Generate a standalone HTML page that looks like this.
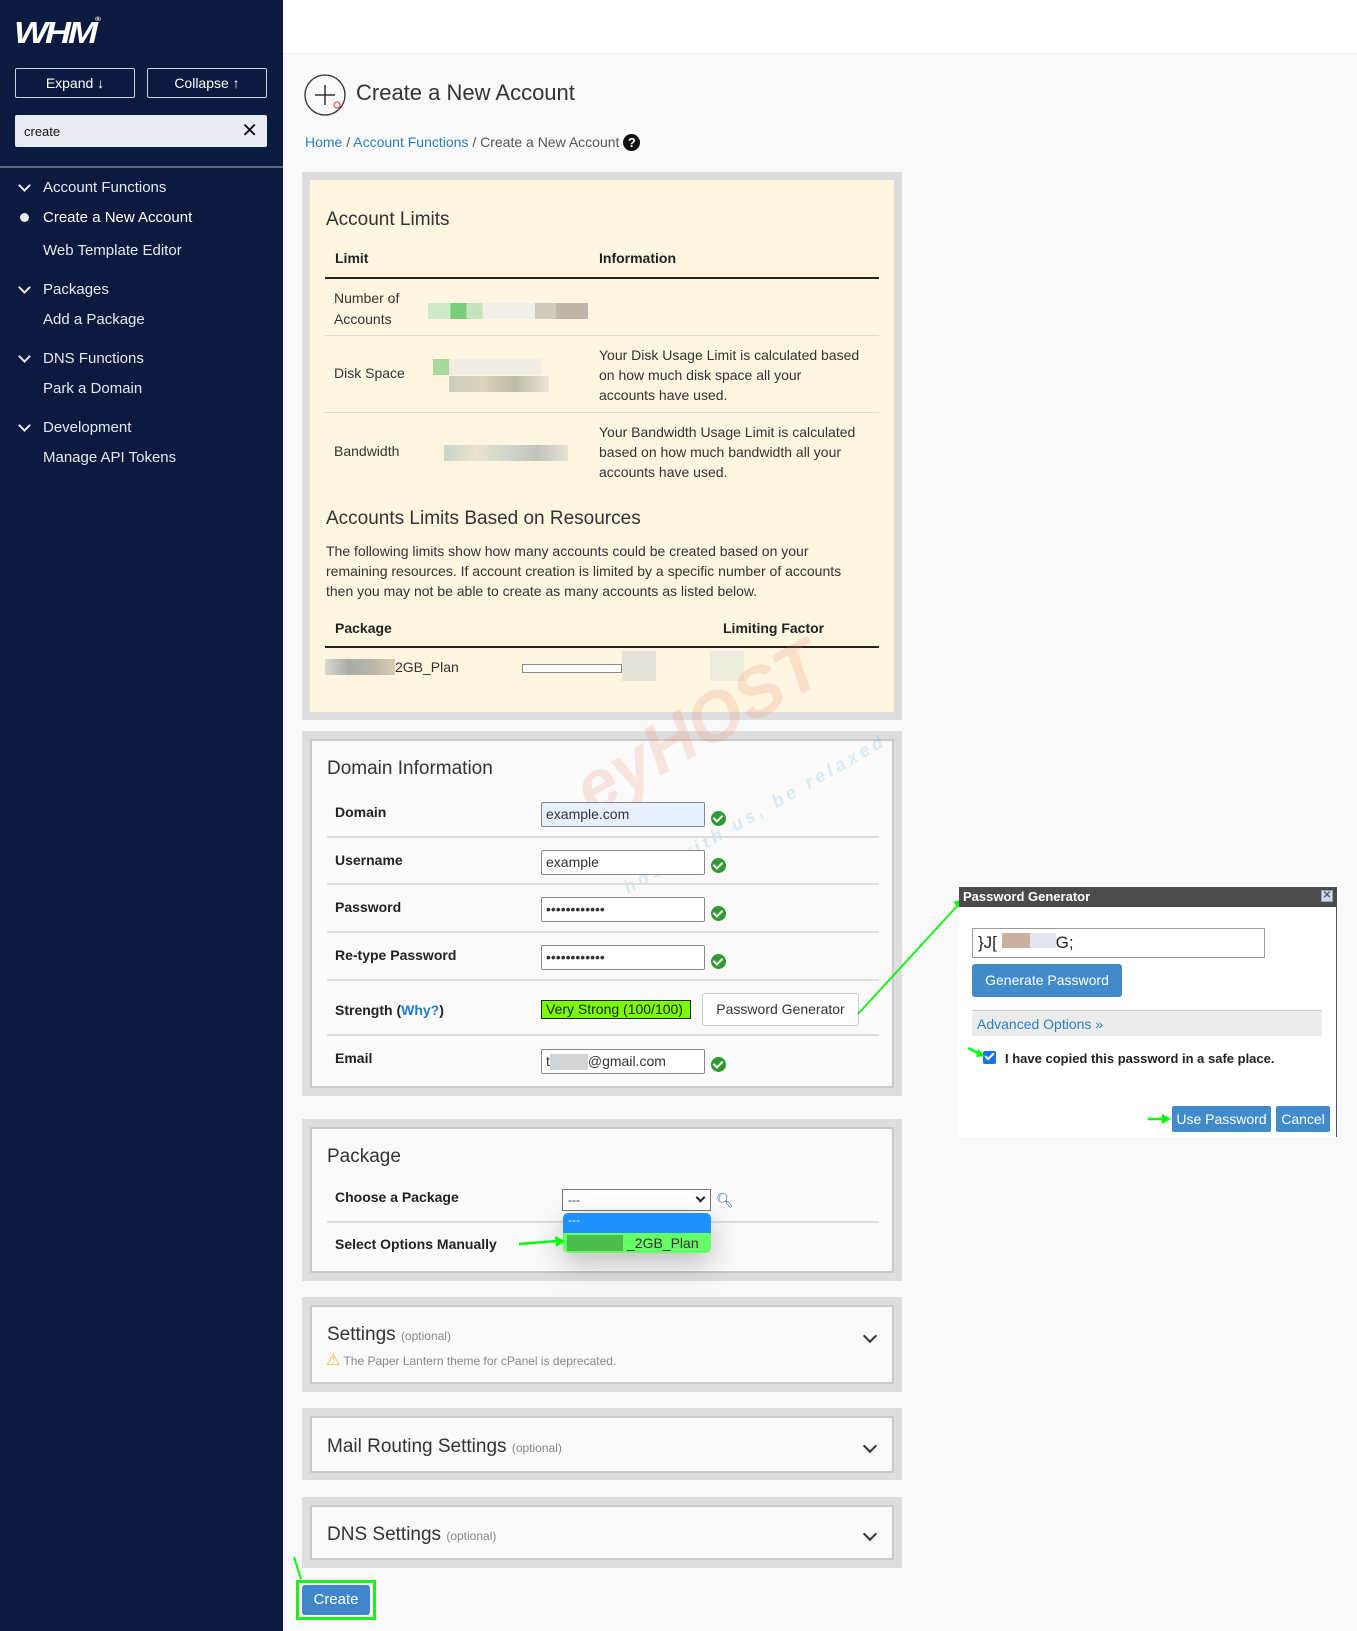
<!DOCTYPE html>
<html><head><meta charset="utf-8"><style>
*{box-sizing:border-box;margin:0;padding:0}
body{width:1357px;height:1631px;position:relative;overflow:hidden;background:#f9f9f9;font-family:"Liberation Sans",sans-serif;color:#333}
.a{position:absolute}
#side{left:0;top:0;width:283px;height:1631px;background:#0b1a3e}
.sb{border:1px solid #c8cede;color:#fff;font-size:14px;text-align:center;line-height:28px;border-radius:2px}
.nav{color:#e6e9f0;font-size:15px;left:43px}
.chev{left:20px;width:9px;height:9px;border-right:2px solid #e6e9f0;border-bottom:2px solid #e6e9f0;transform:rotate(45deg)}
.box{background:#ddd}
.inner{background:#fafafa;border:2px solid #c9c9c9}
.h{font-size:19px;color:#333}
.lbl{font-size:14px;font-weight:bold;color:#222;left:335px}
.sep{left:327px;width:552px;height:2px;background:#ddd}
.inp{left:541px;width:164px;height:25px;border:1px solid #888;background:#fff;font-size:14px;padding-left:4px;line-height:23px;border-radius:2px}
.chk{left:711px;width:15px;height:15px;border-radius:50%;background:#2e9b2e}
.chk:after{content:"";position:absolute;left:4px;top:2px;width:4px;height:7px;border-right:2px solid #fff;border-bottom:2px solid #fff;transform:rotate(45deg)}
.cv{width:10px;height:10px;border-right:2px solid #333;border-bottom:2px solid #333;transform:rotate(45deg);left:865px}
.opt{font-size:12px;color:#888}
.t{font-size:14px;color:#333}
.px{height:16px}
</style></head><body>
<div class="a" style="left:283px;top:0;width:1074px;height:54px;background:#fff;border-bottom:1px solid #eee"></div>
<div id="side" class="a">
<div class="a" style="left:14px;top:12px;color:#fff;font-size:36px;font-weight:900;font-style:italic;letter-spacing:-3px;transform:scaleY(0.85)">WHM<span style="font-size:8px;vertical-align:top;letter-spacing:0">®</span></div>
<div class="a sb" style="left:15px;top:68px;width:120px;height:30px">Expand ↓</div>
<div class="a sb" style="left:147px;top:68px;width:120px;height:30px">Collapse ↑</div>
<div class="a" style="left:15px;top:115px;width:252px;height:32px;background:#e9ecf3;border-radius:2px;font-size:13px;color:#111;padding:9px 9px">create<span style="position:absolute;right:9px;top:3px;font-size:20px">✕</span></div>
<div class="a" style="left:0;top:166px;width:283px;height:2px;background:#5a6580"></div>
<div class="a chev" style="top:181px"></div><div class="a nav" style="top:179px">Account Functions</div>
<div class="a" style="left:20px;top:213px;width:9px;height:9px;border-radius:50%;background:#e6e9f0"></div><div class="a nav" style="top:209px;color:#fff">Create a New Account</div>
<div class="a nav" style="top:242px">Web Template Editor</div>
<div class="a chev" style="top:283px"></div><div class="a nav" style="top:281px">Packages</div>
<div class="a nav" style="top:311px">Add a Package</div>
<div class="a chev" style="top:352px"></div><div class="a nav" style="top:350px">DNS Functions</div>
<div class="a nav" style="top:380px">Park a Domain</div>
<div class="a chev" style="top:421px"></div><div class="a nav" style="top:419px">Development</div>
<div class="a nav" style="top:449px">Manage API Tokens</div>
</div>

<svg class="a" style="left:304px;top:74px" width="44" height="44"><circle cx="21" cy="21" r="20" fill="none" stroke="#333" stroke-width="1.3"/><path d="M21 11v20M11 21h20" stroke="#333" stroke-width="1.5"/><circle cx="33" cy="31" r="3" fill="#fff" stroke="#e55" stroke-width="1.3"/></svg>
<div class="a" style="left:356px;top:80px;font-size:22px;color:#333">Create a New Account</div>
<div class="a" style="left:305px;top:134px;font-size:14px;color:#555"><span style="color:#2a7fc0">Home</span> / <span style="color:#2a7fc0">Account Functions</span> / Create a New Account <span style="display:inline-block;width:17px;height:17px;border-radius:50%;background:#111;color:#fff;text-align:center;font-weight:bold;font-size:13px;line-height:17px">?</span></div>

<!-- Account limits -->
<div class="a box" style="left:302px;top:172px;width:600px;height:548px"></div>
<div class="a" style="left:310px;top:180px;width:584px;height:532px;background:#fcf6e1"></div>
<div class="a h" style="left:326px;top:209px">Account Limits</div>
<div class="a lbl" style="top:250px">Limit</div><div class="a lbl" style="top:250px;left:599px">Information</div>
<div class="a" style="left:325px;top:277px;width:554px;height:2px;background:#222"></div>
<div class="a t" style="left:334px;top:288px;line-height:21px">Number of<br>Accounts</div>
<div class="a px" style="left:428px;top:303px;width:160px;background:linear-gradient(90deg,#cce8c5 0 14%,#77cf77 14% 24%,#c4e4c0 24% 34%,#f1efe9 34% 67%,#cfcbbf 67% 80%,#bfb6aa 80%)"></div>
<div class="a t" style="left:334px;top:365px">Disk Space</div>
<div class="a px" style="left:433px;top:359px;width:108px;background:linear-gradient(90deg,#a7d79a 0 15%,#f0ede6 15%)"></div>
<div class="a px" style="left:449px;top:376px;width:100px;background:linear-gradient(90deg,#cbcbbd,#dcd4bb,#bdbaa9,#ece8d8)"></div>
<div class="a t" style="left:599px;top:345px;line-height:20px">Your Disk Usage Limit is calculated based<br>on how much disk space all your<br>accounts have used.</div>
<div class="a" style="left:325px;top:335px;width:554px;height:1px;background:#e0dccb"></div>
<div class="a" style="left:325px;top:412px;width:554px;height:1px;background:#e0dccb"></div>
<div class="a t" style="left:334px;top:443px">Bandwidth</div>
<div class="a px" style="left:444px;top:445px;width:124px;background:linear-gradient(90deg,#c8d4c8,#eae2cc,#d0d7cd,#c3c3bc,#e3e2d1)"></div>
<div class="a t" style="left:599px;top:422px;line-height:20px">Your Bandwidth Usage Limit is calculated<br>based on how much bandwidth all your<br>accounts have used.</div>
<div class="a h" style="left:326px;top:508px">Accounts Limits Based on Resources</div>
<div class="a t" style="left:326px;top:541px;line-height:20px">The following limits show how many accounts could be created based on your<br>remaining resources. If account creation is limited by a specific number of accounts<br>then you may not be able to create as many accounts as listed below.</div>
<div class="a lbl" style="top:620px">Package</div><div class="a lbl" style="top:620px;left:723px">Limiting Factor</div>
<div class="a" style="left:325px;top:646px;width:554px;height:2px;background:#222"></div>
<div class="a px" style="left:325px;top:659px;width:70px;background:linear-gradient(90deg,#ddd9cf,#a9aca6,#bbb5a7,#d8ccb3)"></div>
<div class="a t" style="left:395px;top:659px">2GB_Plan</div>
<div class="a" style="left:522px;top:664px;width:100px;height:9px;border:1px solid #888;background:#fff"></div>
<div class="a" style="left:622px;top:651px;width:34px;height:30px;background:#e4e2d6"></div>
<div class="a" style="left:710px;top:651px;width:34px;height:30px;background:#ecebdd"></div>

<!-- Domain -->
<div class="a box" style="left:302px;top:731px;width:600px;height:365px"></div>
<div class="a inner" style="left:310px;top:739px;width:584px;height:349px"></div>
<div class="a" style="left:560px;top:760px;font-size:70px;font-weight:900;font-style:italic;color:rgba(240,120,90,.18);transform:rotate(-30deg);transform-origin:left top;white-space:nowrap">eyHOST</div>
<div class="a" style="left:620px;top:880px;font-size:18px;font-weight:bold;font-style:italic;letter-spacing:4px;color:rgba(90,180,230,.22);transform:rotate(-30deg);transform-origin:left top;white-space:nowrap">host with us, be relaxed</div>
<div class="a h" style="left:327px;top:758px">Domain Information</div>
<div class="a lbl" style="top:804px">Domain</div>
<div class="a inp" style="top:802px;background:#e8f0fe">example.com</div><div class="a chk" style="top:811px"></div>
<div class="a sep" style="top:836px"></div>
<div class="a lbl" style="top:852px">Username</div>
<div class="a inp" style="top:850px">example</div><div class="a chk" style="top:858px"></div>
<div class="a sep" style="top:883px"></div>
<div class="a lbl" style="top:899px">Password</div>
<div class="a inp" style="top:897px">••••••••••••</div><div class="a chk" style="top:906px"></div>
<div class="a sep" style="top:931px"></div>
<div class="a lbl" style="top:947px">Re-type Password</div>
<div class="a inp" style="top:945px">••••••••••••</div><div class="a chk" style="top:954px"></div>
<div class="a sep" style="top:979px"></div>
<div class="a lbl" style="top:1002px">Strength (<span style="color:#1a7fd0">Why?</span>)</div>
<div class="a" style="left:541px;top:1000px;width:150px;height:19px;background:#7cfc00;border:1px solid #222;font-size:14px;line-height:17px;padding-left:4px;color:#222">Very Strong (100/100)</div>
<div class="a" style="left:702px;top:993px;width:157px;height:33px;border:1px solid #ccc;background:#fff;border-radius:3px;font-size:14px;text-align:center;line-height:31px">Password Generator</div>
<div class="a sep" style="top:1034px"></div>
<div class="a lbl" style="top:1050px">Email</div>
<div class="a inp" style="top:1049px">t<span style="display:inline-block;width:38px;height:16px;background:#d2d5d8;vertical-align:middle"></span>@gmail.com</div><div class="a chk" style="top:1057px"></div>

<!-- Package -->
<div class="a box" style="left:302px;top:1119px;width:600px;height:162px"></div>
<div class="a inner" style="left:310px;top:1127px;width:584px;height:146px"></div>
<div class="a h" style="left:327px;top:1146px">Package</div>
<div class="a lbl" style="top:1189px">Choose a Package</div>
<div class="a" style="left:562px;top:1189px;width:149px;height:22px;border:1px solid #777;background:#fff;font-size:12px;padding-left:5px;line-height:20px">---<span style="position:absolute;right:6px;top:4px;width:7px;height:7px;border-right:2px solid #222;border-bottom:2px solid #222;transform:rotate(45deg)"></span></div>
<div class="a" style="left:716px;top:1192px;font-size:14px;color:#2a5f9e">🔍︎</div>
<div class="a sep" style="top:1221px;left:327px;width:552px"></div>
<div class="a lbl" style="top:1236px">Select Options Manually</div>
<div class="a" style="left:563px;top:1213px;width:148px;height:40px;border-radius:5px;overflow:hidden;box-shadow:0 10px 30px rgba(0,0,0,.25)"><div style="height:20px;background:#1e90ff;color:#fff;font-size:12px;padding-left:5px">---</div><div style="height:20px;background:#66ff66;font-size:14px;padding-left:64px;line-height:20px;position:relative"><span style="position:absolute;left:4px;top:2px;width:56px;height:16px;background:#4cbd4c"></span>_2GB_Plan</div></div>
<svg class="a" style="left:519px;top:1236px" width="46" height="12"><path d="M0 8L38 5" stroke="#0f0" stroke-width="2.5"/><path d="M36 0L46 5L37 11Z" fill="#0f0"/></svg>

<!-- Settings -->
<div class="a box" style="left:302px;top:1297px;width:600px;height:95px"></div>
<div class="a inner" style="left:310px;top:1305px;width:584px;height:79px"></div>
<div class="a h" style="left:327px;top:1324px">Settings <span class="opt">(optional)</span></div>
<div class="a" style="left:326px;top:1350px;font-size:12px;color:#888"><span style="color:#f5b82e;font-size:16px">⚠</span> The Paper Lantern theme for cPanel is deprecated.</div>
<div class="a cv" style="top:1331px"></div>
<div class="a box" style="left:302px;top:1408px;width:600px;height:72px"></div>
<div class="a inner" style="left:310px;top:1416px;width:584px;height:57px"></div>
<div class="a h" style="left:327px;top:1436px">Mail Routing Settings <span class="opt">(optional)</span></div>
<div class="a cv" style="top:1441px"></div>
<div class="a box" style="left:302px;top:1497px;width:600px;height:71px"></div>
<div class="a inner" style="left:310px;top:1505px;width:584px;height:55px"></div>
<div class="a h" style="left:327px;top:1524px">DNS Settings <span class="opt">(optional)</span></div>
<div class="a cv" style="top:1529px"></div>

<div class="a" style="left:296px;top:1580px;width:80px;height:40px;border:3px solid #1df01d"></div>
<div class="a" style="left:302px;top:1585px;width:68px;height:30px;background:#3f87c9;border-radius:3px;color:#fff;font-size:15px;text-align:center;line-height:30px">Create</div>
<svg class="a" style="left:292px;top:1557px" width="14" height="26"><path d="M2 0L9 22" stroke="#0f0" stroke-width="2"/></svg>

<!-- Dialog -->
<svg class="a" style="left:855px;top:898px" width="110" height="120"><path d="M3 116L104 6" stroke="#1df01d" stroke-width="2"/><path d="M98 4L108 1L106 12Z" fill="#1df01d"/></svg>
<div class="a" style="left:959px;top:887px;width:378px;height:250px;background:#fff;border-right:1px solid #555"></div>
<div class="a" style="left:959px;top:887px;width:378px;height:20px;background:#4b4b4b;color:#fff;font-weight:bold;font-size:13px;padding:2px 4px">Password Generator<span style="position:absolute;right:4px;top:3px;width:12px;height:12px;background:#cdd8f0;border:1px solid #8aa;color:#557;font-size:10px;line-height:10px;text-align:center">✕</span></div>
<div class="a" style="left:972px;top:928px;width:293px;height:30px;border:1px solid #999;font-size:17px;padding:4px 5px;color:#222">}J[ <span style="display:inline-block;width:28px;height:15px;background:#c9b0a0"></span><span style="display:inline-block;width:26px;height:15px;background:#e3e6ee"></span>G;</div>
<div class="a" style="left:972px;top:964px;width:150px;height:33px;background:#428bca;border-radius:3px;color:#fff;font-size:14px;text-align:center;line-height:33px">Generate Password</div>
<div class="a" style="left:972px;top:1010px;width:350px;height:26px;background:#ececec;border-top:1px solid #ccc;color:#2a7fc0;font-size:14px;padding:5px 5px">Advanced Options »</div>
<div class="a" style="left:983px;top:1051px;width:13px;height:13px;background:#1a73e8;border-radius:2px"></div>
<div class="a" style="top:1051px;width:5px;height:9px;border-right:2px solid #fff;border-bottom:2px solid #fff;transform:rotate(45deg);left:987px"></div>
<div class="a" style="left:1005px;top:1051px;font-size:13px;font-weight:bold;color:#222">I have copied this password in a safe place.</div>
<div class="a" style="left:1172px;top:1106px;width:99px;height:26px;background:#428bca;color:#fff;font-size:14px;text-align:center;line-height:26px;border-radius:2px">Use Password</div>
<div class="a" style="left:1276px;top:1106px;width:54px;height:26px;background:#428bca;color:#fff;font-size:14px;text-align:center;line-height:26px;border-radius:2px">Cancel</div>
<svg class="a" style="left:1148px;top:1113px" width="24" height="12"><path d="M0 6H16" stroke="#0f0" stroke-width="2.5"/><path d="M14 1L23 6L14 11Z" fill="#0f0"/></svg>
<svg class="a" style="left:968px;top:1046px" width="18" height="14"><path d="M0 2L12 8" stroke="#0f0" stroke-width="2.5"/><path d="M10 3L17 10L8 11Z" fill="#0f0"/></svg>
</body></html>
